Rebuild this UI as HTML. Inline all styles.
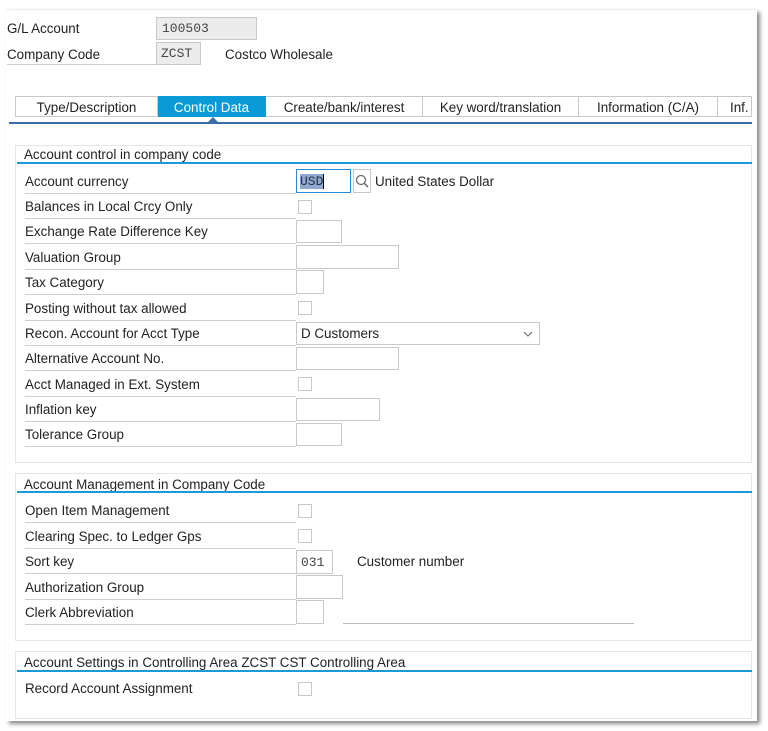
<!DOCTYPE html>
<html><head><meta charset="utf-8"><style>
body{margin:0;width:768px;height:731px;background:#fff;position:relative;overflow:hidden;font-family:"Liberation Sans",Arial,sans-serif;font-size:13.4px;color:#222}
.a{position:absolute}
.win{left:6px;top:9px;width:751px;height:711px;background:#fff;box-shadow:3px 3px 4px rgba(0,0,0,.45);border-top:1px solid #eee}
.lbl{position:absolute;left:25px;width:271px;height:24px;line-height:26px;border-bottom:1px solid #cfcfcf;white-space:nowrap}
.f{position:absolute;border:1px solid #c8c8c8;background:#fff;box-sizing:border-box}
.cb{position:absolute;width:14px;height:14px;border:1px solid #c8c8c8;box-sizing:border-box;left:298px}
.sec{position:absolute;left:15px;width:737px;border:1px solid #e6e6e6;box-sizing:border-box}
.hd{position:absolute;left:24px;white-space:nowrap}
.hl{position:absolute;left:17px;width:735px;height:2px;background:#1a9ad8}
.tab{position:absolute;top:96px;height:21px;line-height:21px;text-align:center;border:1px solid #c8c8c8;border-left:none;box-sizing:border-box;white-space:nowrap;overflow:hidden}
.mono{font-family:"Liberation Mono",monospace;font-size:13px}
</style></head><body>
<div class="a win"></div>
<div class="a" style="left:7px;top:21px">G/L Account</div>
<div class="f mono" style="left:156px;top:17px;width:101px;height:23px;background:#ececec;padding:3px 5px;color:#444">100503</div>
<div class="a" style="left:7px;top:39px;width:149px;height:25px;border-bottom:1px solid #cfcfcf"></div>
<div class="a" style="left:7px;top:47px">Company Code</div>
<div class="f mono" style="left:156px;top:42px;width:45px;height:23px;background:#ececec;padding:3px 4px;color:#444">ZCST</div>
<div class="a" style="left:225px;top:47px">Costco Wholesale</div>

<div class="tab" style="left:15px;width:143px;border-left:1px solid #c8c8c8">Type/Description</div>
<div class="tab" style="left:158px;width:108px;background:#0a9ad8;color:#fff;border-color:#0a9ad8">Control Data</div>
<div class="tab" style="left:266px;width:157px">Create/bank/interest</div>
<div class="tab" style="left:423px;width:156px">Key word/translation</div>
<div class="tab" style="left:579px;width:139px">Information (C/A)</div>
<div class="tab" style="left:718px;width:34px;text-align:left;padding-left:12px">Inf.</div>
<div class="a" style="left:9px;top:122px;width:743px;height:2px;background:#3a6ea5"></div>
<div class="a" style="left:207px;top:117px;width:0;height:0;border-left:6px solid transparent;border-right:6px solid transparent;border-bottom:6px solid #3a6ea5"></div>

<div class="sec" style="top:145px;height:318px"></div>
<div class="hd" style="top:147px">Account control in company code</div>
<div class="hl" style="top:162px"></div>
<div class="lbl" style="top:169px">Account currency</div>
<div class="f mono" style="left:296px;top:169px;width:55px;height:24px;border-color:#2a8ad8;padding:4px 3px"><span style="background:#8fa9d0;color:#234">USD</span><span style="border-left:1px solid #000"></span></div>
<div class="f" style="left:353px;top:169px;width:18px;height:24px"><svg width="16" height="22"><circle cx="7" cy="10" r="4.5" fill="none" stroke="#666" stroke-width="1.2"/><path d="M10.5 13.5 L14 17" stroke="#666" stroke-width="1.5"/></svg></div>
<div class="a" style="left:375px;top:174px">United States Dollar</div>
<div class="lbl" style="top:194px">Balances in Local Crcy Only</div><div class="cb" style="top:200px"></div>
<div class="lbl" style="top:219px">Exchange Rate Difference Key</div><div class="f" style="left:296px;top:220px;width:46px;height:23px"></div>
<div class="lbl" style="top:245px">Valuation Group</div><div class="f" style="left:296px;top:245px;width:103px;height:24px"></div>
<div class="lbl" style="top:270px">Tax Category</div><div class="f" style="left:296px;top:270px;width:28px;height:24px"></div>
<div class="lbl" style="top:296px">Posting without tax allowed</div><div class="cb" style="top:301px"></div>
<div class="lbl" style="top:321px">Recon. Account for Acct Type</div>
<div class="f" style="left:296px;top:322px;width:244px;height:23px;padding:3px 4px">D Customers<svg class="a" style="right:6px;top:8px" width="10" height="6"><path d="M1 1 L5 5 L9 1" fill="none" stroke="#666"/></svg></div>
<div class="lbl" style="top:346px">Alternative Account No.</div><div class="f" style="left:296px;top:347px;width:103px;height:23px"></div>
<div class="lbl" style="top:372px">Acct Managed in Ext. System</div><div class="cb" style="top:377px"></div>
<div class="lbl" style="top:397px">Inflation key</div><div class="f" style="left:296px;top:398px;width:84px;height:23px"></div>
<div class="lbl" style="top:422px">Tolerance Group</div><div class="f" style="left:296px;top:423px;width:46px;height:23px"></div>

<div class="sec" style="top:473px;height:168px"></div>
<div class="hd" style="top:477px">Account Management in Company Code</div>
<div class="hl" style="top:491px"></div>
<div class="lbl" style="top:498px">Open Item Management</div><div class="cb" style="top:504px"></div>
<div class="lbl" style="top:524px">Clearing Spec. to Ledger Gps</div><div class="cb" style="top:529px"></div>
<div class="lbl" style="top:549px">Sort key</div><div class="f mono" style="left:296px;top:550px;width:37px;height:24px;padding:4px 4px;color:#444">031</div>
<div class="a" style="left:357px;top:554px">Customer number</div>
<div class="lbl" style="top:575px">Authorization Group</div><div class="f" style="left:296px;top:575px;width:47px;height:24px"></div>
<div class="lbl" style="top:600px">Clerk Abbreviation</div><div class="f" style="left:296px;top:600px;width:28px;height:24px"></div>
<div class="a" style="left:343px;top:623px;width:291px;height:1px;background:#bbb"></div>

<div class="sec" style="top:651px;height:68px"></div>
<div class="hd" style="top:655px">Account Settings in Controlling Area ZCST CST Controlling Area</div>
<div class="hl" style="top:670px"></div>
<div class="a" style="left:25px;top:681px">Record Account Assignment</div><div class="cb" style="top:682px"></div>
</body></html>
